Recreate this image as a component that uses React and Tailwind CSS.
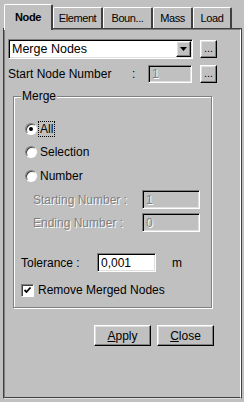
const sunken = "border-t-[#808080] border-l-[#808080] border-b-white border-r-white border shadow-[inset_1px_1px_0_#000,inset_-1px_-1px_0_#dfdfdf]";
const raised = "border border-t-white border-l-white border-b-black border-r-black shadow-[inset_-1px_-1px_0_#808080,inset_1px_1px_0_#dfdfdf]";
const dim = "text-[#808080] [text-shadow:1px_1px_0_#fff]";

function Dots() {
  return (
    <button className={`w-[17px] h-[18px] bg-[#c0c0c0] ${raised} flex items-end justify-center pb-[3px] text-[11px] leading-none`}>
      ...
    </button>
  );
}

function Radio({ checked, label, focus }) {
  return (
    <div className="flex items-center h-[20px] ml-[4px]">
      <span className="w-[12px] h-[12px] rounded-full bg-white border border-t-[#808080] border-l-[#808080] border-b-white border-r-white shadow-[inset_1px_1px_0_#404040] flex items-center justify-center">
        {checked && <span className="w-[4px] h-[4px] rounded-full bg-black" />}
      </span>
      <span className={`ml-[1px] px-[1px] leading-[14px] ${focus ? "border border-dotted border-black" : "border border-transparent"}`}>
        {label}
      </span>
    </div>
  );
}

export default function App() {
  const tabs = [
    { name: "Element", w: "w-[50px]" },
    { name: "Boun...", w: "w-[50px]" },
    { name: "Mass", w: "w-[40px]" },
    { name: "Load", w: "w-[39px]" },
  ];

  return (
    <div className="w-[244px] h-[402px] bg-[#c0c0c0] pt-[4px] pl-[3px] pr-[2px] font-['Liberation_Sans',Arial,sans-serif] text-[12px] text-black overflow-hidden">
      {/* tabs */}
      <div className="flex items-end h-[24px] pl-[1px]">
        <div className="relative z-10 -mb-[2px] w-[49px] h-[26px] bg-[#c0c0c0] border-t border-l border-white border-r-2 border-r-[#404040] rounded-t-[2px] flex items-start justify-center pt-[4px] font-bold text-[11px] tracking-[-0.4px]">
          Node
        </div>
        {tabs.map((t) => (
          <div key={t.name} className={`${t.w} h-[21px] bg-[#c0c0c0] border-t border-l border-white border-r-2 border-r-[#404040] rounded-t-[2px] flex items-center justify-center text-[11px] tracking-[-0.4px]`}>
            {t.name}
          </div>
        ))}
      </div>

      {/* panel */}
      <div className="h-[371px] border border-t-[#404040] border-l-[#404040] border-r-[#404040] border-b-[#dfdfdf]">
        <div className="h-full border border-t-[#808080] border-l-[#808080] border-r-white border-b-[#404040] pt-[9px] pl-[3px]">
          {/* combo */}
          <div className="flex items-start">
            <div className={`w-[185px] h-[20px] bg-white ${sunken} flex items-center justify-between pl-[3px] pr-[1px]`}>
              <span className="text-[12.5px]">Merge Nodes</span>
              <span className={`w-[15px] h-[16px] bg-[#c0c0c0] ${raised} flex items-center justify-center`}>
                <svg width="7" height="4" viewBox="0 0 7 4"><path d="M0 0h7L3.5 4z" fill="#000" /></svg>
              </span>
            </div>
            <div className="ml-[7px] mt-[1px]"><Dots /></div>
          </div>

          {/* start node */}
          <div className="flex items-center mt-[6px] h-[18px]">
            <span className="w-[124px]">Start Node Number</span>
            <span className="w-[16px]">:</span>
            <div className={`w-[44px] h-[18px] ${sunken} flex items-center pl-[3px] ${dim}`}>1</div>
            <div className="ml-[8px]"><Dots /></div>
          </div>

          {/* merge group */}
          <div className="relative ml-[5px] mt-[13px] w-[199px] border border-[#808080] shadow-[inset_1px_1px_0_#fff,1px_1px_0_#fff] pt-[22px] pb-[8px] pl-[7px]">
            <span className="absolute -top-[8px] left-[7px] bg-[#c0c0c0] px-[1px] leading-[15px]">Merge</span>
            <Radio checked label="All" focus />
            <div className="mt-[3px]"><Radio label="Selection" /></div>
            <div className="mt-[4px]"><Radio label="Number" /></div>

            <div className="flex items-center mt-[4px] h-[19px] ml-[12px]">
              <span className={`w-[109px] ${dim}`}>Starting Number :</span>
              <div className={`w-[58px] h-[19px] ${sunken} flex items-center pl-[3px] ${dim}`}>1</div>
            </div>
            <div className="flex items-center mt-[4px] h-[19px] ml-[12px]">
              <span className={`w-[109px] ${dim}`}>Ending Number :</span>
              <div className={`w-[58px] h-[19px] ${sunken} flex items-center pl-[3px] ${dim}`}>0</div>
            </div>

            <div className="flex items-center mt-[21px] h-[19px]">
              <span className="w-[76px]">Tolerance :</span>
              <div className={`w-[59px] h-[19px] bg-white ${sunken} flex items-center pl-[3px]`}>0,001</div>
              <span className="ml-[16px]">m</span>
            </div>

            <div className="flex items-center mt-[9px] h-[18px]">
              <span className="w-[13px] h-[13px] bg-white border border-t-[#808080] border-l-[#808080] border-b-white border-r-white shadow-[inset_1px_1px_0_#404040] flex items-center justify-center">
                <svg width="9" height="9" viewBox="0 0 9 9"><path d="M1.5 4l2 2 4-4.5" stroke="#000" strokeWidth="1.8" fill="none" /></svg>
              </span>
              <span className="ml-[4px]">Remove Merged Nodes</span>
            </div>
          </div>

          {/* buttons */}
          <div className="flex mt-[17px] ml-[86px] gap-[6px]">
            <button className={`w-[57px] h-[21px] bg-[#c0c0c0] ${raised} flex items-center justify-center`}>
              <span><span className="underline">A</span>pply</span>
            </button>
            <button className={`w-[57px] h-[21px] bg-[#c0c0c0] ${raised} flex items-center justify-center`}>
              <span><span className="underline">C</span>lose</span>
            </button>
          </div>
        </div>
      </div>
    </div>
  );
}
